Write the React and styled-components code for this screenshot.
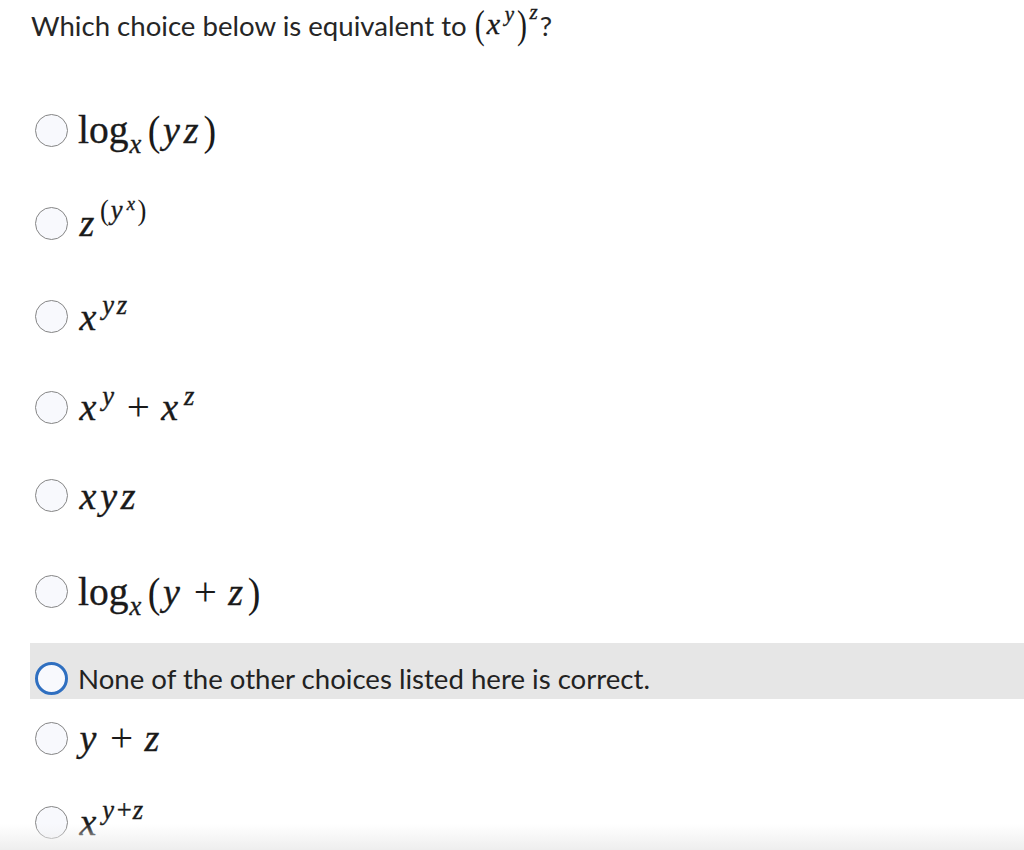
import React from 'react';
import styled, { createGlobalStyle } from 'styled-components';

const Global = createGlobalStyle`
  html, body { margin: 0; padding: 0; background: #fff; }
  body { font-family: 'Lato', 'Liberation Sans', sans-serif; color: #2b2b2b; }
`;

const Page = styled.div`
  width: 1024px;
  height: 850px;
  overflow: hidden;
  position: relative;
`;

const Question = styled.div`
  padding: 9px 0 0 31px;
  height: 76px;
  font-size: 27.6px;
  display: flex;
  align-items: flex-start;
  color: #262626;
`;

const Math = styled.span`
  font-family: 'Liberation Serif', 'DejaVu Serif', serif;
  font-size: ${p => p.size || 38}px;
  color: #1a1a1a;
  white-space: nowrap;
  line-height: 1;
  -webkit-text-stroke: 0.35px #1a1a1a;
`;

const Log = styled.span`
  font-size: 1.04em;
`;

const I = styled.i`
  font-style: italic;
  letter-spacing: 0.1em;
  padding-left: 0.04em;
`;

const Sup = styled.sup`
  font-size: 0.7em;
  vertical-align: ${p => p.up || '0.6em'};
  line-height: 0;
  padding-left: 0.04em;
`;

const Sub = styled.sub`
  font-size: 0.7em;
  vertical-align: -0.4em;
  line-height: 0;
  padding-right: 0.1em;
`;

const Op = styled.span`
  padding: 0 0.24em;
  font-size: 1.08em;
  -webkit-text-stroke: 0;
`;

const Paren = styled.span`
  display: inline-block;
  transform: scaleY(${p => p.big ? 1.35 : 1.12});
  padding: 0 0.03em;
  -webkit-text-stroke: 0;
`;

const List = styled.div`
  display: flex;
  flex-direction: column;
`;

const Row = styled.label`
  display: flex;
  align-items: ${p => p.active ? 'flex-end' : 'center'};
  gap: 10px;
  height: ${p => p.h}px;
  margin-left: 30px;
  padding-left: 5px;
  padding-bottom: ${p => p.active ? 4 : 0}px;
  box-sizing: border-box;
  background: ${p => p.active ? '#e6e6e6' : 'transparent'};
`;

const Radio = styled.span`
  flex: none;
  width: 33px;
  height: 33px;
  border-radius: 50%;
  box-sizing: border-box;
  background: #f8f9fd;
  border: ${p => p.active ? '3px solid #2f6fc0' : '1.5px solid #858585'};
`;

const Text = styled.span`
  font-size: 27.6px;
  color: #222;
`;

const Fade = styled.div`
  position: absolute;
  left: 0;
  right: 0;
  bottom: 0;
  height: 26px;
  background: linear-gradient(to bottom, rgba(240,240,240,0), #eeeeee);
  pointer-events: none;
`;

const options = [
  {
    h: 91,
    body: (
      <Math><Log>log</Log><Sub><I>x</I></Sub><Paren>(</Paren><I>yz</I><Paren>)</Paren></Math>
    ),
  },
  {
    h: 94,
    body: (
      <Math><I>z</I><Sup up="0.65em"><Paren>(</Paren><I>y</I><Sup up="0.45em"><I>x</I></Sup><Paren>)</Paren></Sup></Math>
    ),
  },
  {
    h: 93,
    body: (
      <Math><I>x</I><Sup><I>yz</I></Sup></Math>
    ),
  },
  {
    h: 88,
    body: (
      <Math><I>x</I><Sup><I>y</I></Sup><Op>+</Op><I>x</I><Sup><I>z</I></Sup></Math>
    ),
  },
  {
    h: 89,
    body: (
      <Math><I>xyz</I></Math>
    ),
  },
  {
    h: 103,
    body: (
      <Math><Log>log</Log><Sub><I>x</I></Sub><Paren>(</Paren><I>y</I><Op>+</Op><I>z</I><Paren>)</Paren></Math>
    ),
  },
  {
    h: 56,
    active: true,
    body: <Text>None of the other choices listed here is correct.</Text>,
  },
  {
    h: 78,
    body: (
      <Math><I>y</I><Op>+</Op><I>z</I></Math>
    ),
  },
  {
    h: 90,
    body: (
      <Math><I>x</I><Sup><I>y</I>+<I>z</I></Sup></Math>
    ),
  },
];

export default function App() {
  return (
    <Page>
      <Global />
      <Question>
        Which choice below is equivalent to&nbsp;
        <Math size={30}>
          <Paren big>(</Paren><I>x</I><Sup><I>y</I></Sup><Paren big>)</Paren><Sup up="0.7em"><I>z</I></Sup>
        </Math>
        ?
      </Question>
      <List>
        {options.map((o, i) => (
          <Row key={i} h={o.h} active={o.active}>
            <Radio active={o.active} />
            {o.body}
          </Row>
        ))}
      </List>
      <Fade />
    </Page>
  );
}
